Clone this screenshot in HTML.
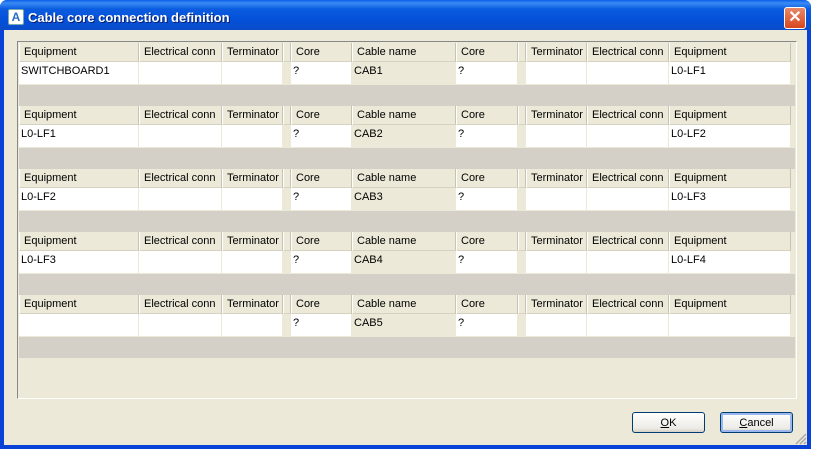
<!DOCTYPE html><html><head><style>
body{margin:0;width:813px;height:467px;background:#fff;position:relative;overflow:hidden;font-family:"Liberation Sans",Arial,sans-serif;font-size:11px}
.win{position:absolute;left:0;top:0;width:811px;height:449px;background:#0842d6;border-radius:7px 7px 0 0}
.title{position:absolute;left:0;top:0;width:811px;height:30px;border-radius:7px 7px 0 0;background:linear-gradient(#0a5fe8 0%,#3b8bf5 10%,#0a5ce0 30%,#0450d8 70%,#0a4cc8 100%)}
.tt{position:absolute;left:28px;top:10px;color:#fff;font-weight:bold;font-size:13px;text-shadow:1px 1px #0a1e6e}
.ico{position:absolute;left:8px;top:9px;width:14px;height:14px;background:#fff;border:1px solid #7aa;border-radius:2px;color:#2a6cc8;font-weight:bold;font-size:12px;line-height:14px;text-align:center}
.x{position:absolute;left:784px;top:7px;width:20px;height:20px;border:1px solid #fff;border-radius:3px;background:linear-gradient(#e8886a,#d8461e);color:#fff;font-size:16px;font-weight:bold;line-height:20px;text-align:center}
.client{position:absolute;left:4px;top:30px;width:803px;height:415px;background:#ece9d8}
.panel{position:absolute;left:17px;top:41px;width:778px;height:356px;border:1px solid #888;border-right-color:#fff;border-bottom-color:#fff;background:#ece9d8}
.c{position:absolute;box-sizing:border-box;padding-left:4px;white-space:nowrap;overflow:hidden}
.h{height:19px;line-height:19px;background:#ece9d8;border-right:1px solid #c7c3b3;border-left:1px solid #fff;border-bottom:1px solid #d6d2c2}
.d{height:23px;line-height:19px;background:#fff;border-right:1px solid #ece9d8;border-bottom:1px solid #ece9d8;padding-left:2px}
.g{position:absolute;left:19px;width:776px;height:21px;background:#d4d0c8}
.b{position:absolute;top:412px;width:73px;height:21px;border:1px solid #003c74;border-radius:3px;background:linear-gradient(#fff,#ecebe6 80%,#d6d0c5);text-align:center;line-height:20px;font-size:11px;box-sizing:border-box}
</style></head><body>
<div class="win"></div><div class="title"><div class="ico">A</div><div class="tt">Cable core connection definition</div><div class="x">✕</div></div>
<div class="client"></div>
<div class="panel"></div>
<div id="t"></div>
<div class="b" style="left:632px"><u>O</u>K</div>
<div class="b" style="left:720px;box-shadow:inset 0 0 0 2px #9ab8ee"><u>C</u>ancel</div>
<svg style="position:absolute;left:795px;top:433px" width="12" height="12"><path d="M11 1L1 11M11 5L5 11M11 9L9 11" stroke="#aaa" stroke-width="1.5"/></svg>
<script>
var cols=[19,139,222,283,291,352,456,518,526,587,669,791];
var hd=["Equipment","Electrical conn","Terminator","","Core","Cable name","Core","","Terminator","Electrical conn","Equipment"];
var data=[["SWITCHBOARD1","L0-LF1","CAB1"],["L0-LF1","L0-LF2","CAB2"],["L0-LF2","L0-LF3","CAB3"],["L0-LF3","L0-LF4","CAB4"],["","","CAB5"]];
var s="";
for(var r=0;r<5;r++){var y=43+63*r;
for(var i=0;i<11;i++){var x=cols[i],w=cols[i+1]-x;
s+='<div class="c h" style="left:'+x+'px;top:'+y+'px;width:'+w+'px">'+hd[i]+'</div>';
var t="";if(i==0)t=data[r][0];if(i==10)t=data[r][1];if(i==5)t=data[r][2];if(i==4||i==6)t="?";
var bg=(i==3||i==5||i==7)?"background:#ece9d8;":"";
s+='<div class="c d" style="'+bg+'left:'+x+'px;top:'+(y+19)+'px;width:'+w+'px">'+t+'</div>';}
s+='<div class="g" style="top:'+(y+42)+'px"></div>';}
document.getElementById("t").innerHTML=s;
</script>
</body></html>
